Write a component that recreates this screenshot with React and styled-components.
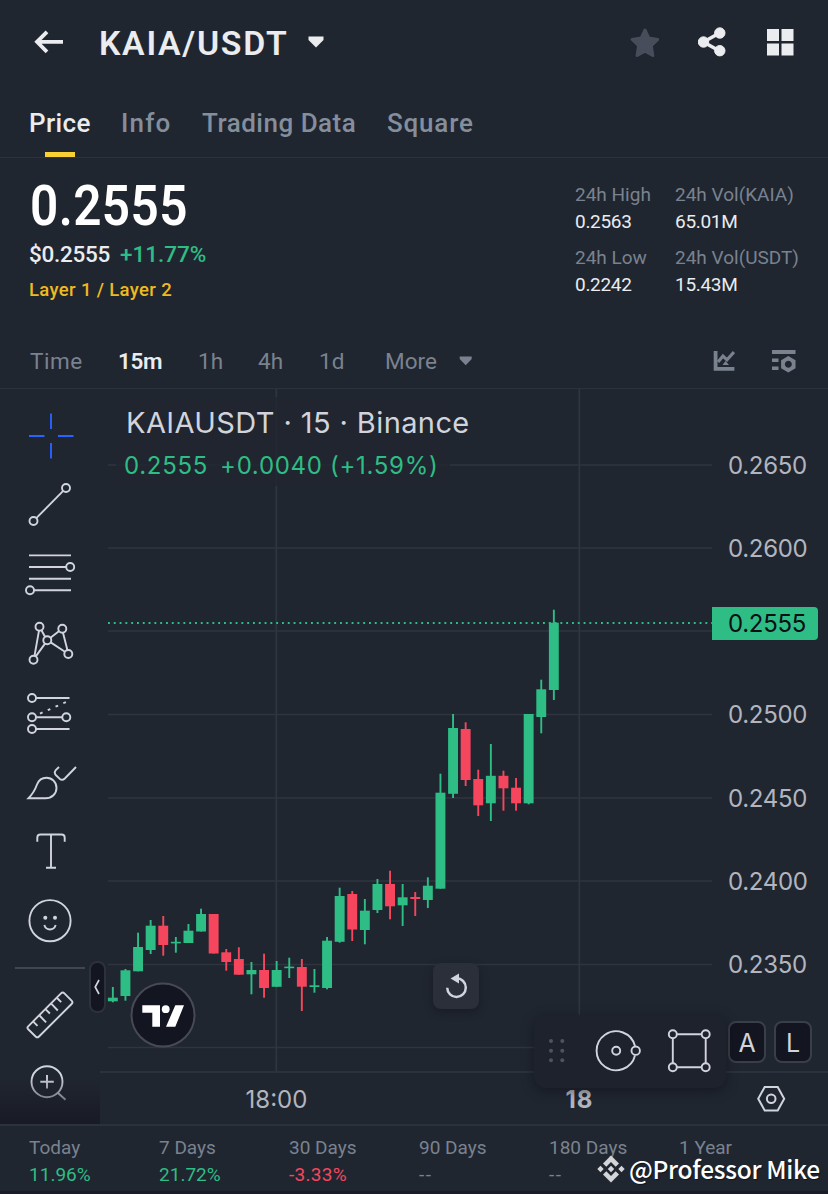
import React from 'react';
import styled, { createGlobalStyle } from 'styled-components';

const GlobalStyle = createGlobalStyle`
* {
  box-sizing: border-box;
}
body {
  margin: 0;
  background: #202630;
}
`;

const Page = styled.div`
position: relative;
display: flex;
flex-direction: column;
width: 828px;
height: 1194px;
overflow: hidden;
background: #202630;
color: #eaecef;
font-family: Roboto, 'Noto Sans', sans-serif;
white-space: nowrap;
border-bottom: 3px solid #1b1c28;
`;

const Header = styled.header`
display: flex;
align-items: center;
height: 86px;
padding: 0 34px 2px 33px;
`;

const Pair = styled.h1`
margin: 4px 19.5px 0 34px;
font-size: 33.8px;
font-weight: 600;
line-height: 40px;
letter-spacing: 1.7px;
`;

const HeaderActions = styled.div`
display: flex;
align-items: center;
gap: 39px;
margin-left: auto;
`;

const Tabs = styled.nav`
display: flex;
height: 72px;
padding-left: 29px;
gap: 30px;
border-bottom: 1px solid #2b343e;
`;

const Tab = styled.div`
position: relative;
line-height: 74px;
font-size: 26px;
font-weight: 500;
width: ${props => props.$w}px;
letter-spacing: ${props => props.$track || 0}px;
color: ${props => props.$active ? '#eaecef' : '#848e9c'};

&::after {
  content: '';
  display: ${props => props.$active ? 'block' : 'none'};
  position: absolute;
  left: 16px;
  bottom: 0;
  width: 30px;
  height: 5px;
  background: #f8d033;
}
`;

const Summary = styled.section`
display: flex;
justify-content: space-between;
height: 176px;
padding: 19px 0 0 29px;
`;

const LastPrice = styled.div`
padding-left: 1px;
font-size: 55px;
font-weight: 600;
line-height: 58px;
color: #fff;
letter-spacing: 0.5px;
transform: scaleX(0.9);
transform-origin: left;
`;

const SubPrice = styled.div`
display: flex;
gap: 10px;
font-size: 22.5px;
font-weight: 500;
line-height: 39px;
letter-spacing: -0.3px;
`;

const Up = styled.span`
color: #2ebd85;
letter-spacing: 0;
`;

const Tag = styled.div`
font-size: 18.5px;
font-weight: 500;
line-height: 33px;
color: #ecbb20;
letter-spacing: 0.35px;
`;

const Stats = styled.div`
display: grid;
grid-template-columns: 100px 153px;
grid-template-rows: 63px 63px;
padding-top: 4px;
`;

const StatLabel = styled.div`
font-size: 19px;
line-height: 27px;
color: #7a828f;
`;

const StatValue = styled.div`
font-size: 19px;
line-height: 27px;
letter-spacing: ${props => props.$track || -0.3}px;
color: ${props => props.color || '#eaecef'};
`;

const Intervals = styled.div`
display: flex;
align-items: center;
height: 55px;
padding: 0 31px 0 30px;
border-bottom: 1.5px solid #2b323d;
`;

const Interval = styled.div`
width: ${props => props.$w}px;
font-size: 22.5px;
line-height: 54px;
font-weight: ${props => props.$active ? 600 : 400};
color: ${props => props.$active ? '#eaecef' : '#7a828f'};
letter-spacing: ${props => props.$track || 0}px;
`;

const IntervalActions = styled.div`
display: flex;
align-items: center;
gap: 37px;
margin-left: auto;
`;

const ChartArea = styled.section`
display: flex;
height: 737px;
border-bottom: 2px solid #2b323d;
font-family: Inter, Roboto, sans-serif;
`;

const Sidebar = styled.aside`
position: relative;
width: 100px;
padding-top: 12px;
`;

const ToolIcon = styled.svg`
display: block;
fill: none;
stroke: ${props => props.color || '#d1d4dc'};
stroke-width: 1.9;
`;

const Divider = styled.div`
height: 2px;
margin: 14px 15px 11px;
background: #42464f;
`;

const Fade = styled.div`
position: absolute;
left: 0;
right: 0;
bottom: 0;
height: 48px;
background: linear-gradient(rgba(24, 26, 37, 0), rgba(24, 26, 37, 0.95));
`;

const Collapse = styled.div`
position: absolute;
left: 89px;
top: 572px;
z-index: 2;
display: flex;
align-items: center;
justify-content: center;
width: 17px;
height: 52px;
border: 2px solid #2c313b;
border-radius: 8px;
background: #131620;
`;

const Chart = styled.div`
position: relative;
display: grid;
grid-template-columns: 612px 116px;
grid-template-rows: 682px 53px;
`;

const Plot = styled.svg`
display: block;
`;

const Legend = styled.div`
position: absolute;
left: 16px;
top: 8px;
width: 334px;
padding: 4px 0 0 8px;
background: rgba(32, 38, 48, 0.8);
`;

const Symbol = styled.div`
padding-left: 2px;
font-size: 29px;
line-height: 43px;
color: #d1d4dc;
letter-spacing: 0.4px;
`;

const Change = styled.div`
display: flex;
gap: 12px;
padding-top: 1px;
font-size: 24px;
line-height: 41px;
color: #2ebd85;
letter-spacing: 0.7px;
`;

const PriceAxis = styled.div`
position: relative;
padding-top: 34.5px;
color: #b2b5be;
`;

const PriceLabel = styled.div`
height: 83.25px;
padding-left: 16px;
font-size: 24px;
line-height: 83.25px;
letter-spacing: -0.3px;
`;

const CurrentPrice = styled.div`
position: absolute;
left: 0;
top: 218px;
width: 106px;
height: 33px;
padding-left: 16px;
border-radius: 0 4px 4px 0;
background: #2ebd85;
color: #0c0e15;
font-size: 24px;
line-height: 33px;
letter-spacing: -0.3px;
`;

const ScaleButtons = styled.div`
position: absolute;
left: 16px;
top: 632px;
display: flex;
gap: 8px;
`;

const ScaleButton = styled.div`
width: 38px;
height: 42px;
border: 2px solid #3a3e48;
border-radius: 8px;
background: #131620;
color: #d1d4dc;
font-size: 25px;
line-height: 40px;
text-align: center;
`;

const TimeAxis = styled.div`
display: grid;
grid-template-columns: 353px 250px;
border-top: 2px solid #2b323d;
line-height: 54px;
font-size: 24px;
color: #b2b5be;
text-align: center;
`;

const TimeLabel = styled.div`
font-weight: ${props => props.$bold ? 700 : 400};
padding-left: ${props => props.$bold ? 3 : 0}px;
letter-spacing: ${props => props.$bold ? 1 : 0}px;
`;

const AxisSettings = styled.div`
display: flex;
align-items: center;
padding: 1px 0 0 44px;
border-top: 2px solid #2b323d;
`;

const Logo = styled.svg`
position: absolute;
left: 30px;
top: 593px;
`;

const ResetButton = styled.div`
position: absolute;
left: 333px;
top: 574px;
width: 46px;
height: 46px;
border-radius: 8px;
background: #2a2f39;
box-shadow: 0 3px 8px rgba(10, 12, 20, 0.4);
`;

const FloatingBar = styled.div`
position: absolute;
left: 434px;
top: 626px;
width: 192px;
height: 73px;
border-radius: 12px;
background: #1e222d;
box-shadow: 0 3px 12px rgba(10, 12, 20, 0.5);
`;

const Performance = styled.footer`
display: grid;
grid-template-columns: repeat(6, 130px);
padding: 8px 0 0 29px;
`;

const Watermark = styled.div`
position: absolute;
left: 597px;
bottom: 4px;
display: flex;
align-items: center;
gap: 4px;
font-family: 'Noto Sans CJK SC', 'Open Sans', sans-serif;
font-size: 24.5px;
font-weight: 500;
line-height: 36px;
color: #fff;
text-shadow: 1px 1px 1px rgba(0, 0, 0, 0.5);
letter-spacing: -0.3px;
`;

const prices = ['0.2650', '0.2600', '', '0.2500', '0.2450', '0.2400', '0.2350'];

const intervals = [
  { label: 'Time', w: 88, track: 0.5 },
  { label: '15m', w: 80, track: -0.4, active: true },
  { label: '1h', w: 60 },
  { label: '4h', w: 61 },
  { label: '1d', w: 66 },
  { label: 'More', w: 74 },
];

const performance = [
  { label: 'Today', value: '11.96%', color: '#2ebd85', track: 0.01 },
  { label: '7 Days', value: '21.72%', color: '#2ebd85', track: 0.01 },
  { label: '30 Days', value: '-3.33%', color: '#f6465d', track: 0.3 },
  { label: '90 Days', value: '--', color: '#7a828f', track: 1.5 },
  { label: '180 Days', value: '--', color: '#7a828f', track: 1.5 },
  { label: '1 Year', value: '--', color: '#7a828f', track: 1.5 },
];

// [up, high, bodyTop, bodyBottom, low] in chart units
const candles = [
  [1, 987, 997.7, 1001.3, 1002.3],
  [1, 969, 970.3, 996, 1000.7],
  [1, 932.7, 947, 971.3, 971.3],
  [1, 920, 925.7, 950, 954],
  [0, 916, 925.7, 945, 955.7],
  [1, 937, 941.8, 943.4, 952.7],
  [1, 924, 930.7, 943, 943],
  [1, 908.7, 914, 931.5, 931.5],
  [0, 914, 914, 953.5, 953.5],
  [0, 949, 952.3, 962, 970.7],
  [0, 947.3, 959, 974.7, 974.7],
  [1, 962, 970, 974.3, 994.3],
  [0, 953.7, 970, 988, 997.7],
  [1, 961, 970, 986.8, 986.8],
  [1, 957.7, 966.6, 968.2, 978],
  [0, 959, 967, 986.7, 1011],
  [1, 969, 985.3, 987, 992.7],
  [1, 937, 940.7, 988, 989.3],
  [1, 887.7, 896, 941.8, 942.7],
  [0, 891, 894, 929.5, 941],
  [1, 899, 910.7, 930, 944.3],
  [1, 879, 884, 910, 913],
  [0, 870.7, 884, 906.3, 919.3],
  [1, 884, 897.3, 905.3, 926],
  [0, 892, 897, 899, 916],
  [1, 877.3, 885.7, 900, 908],
  [1, 773.7, 792.7, 888.7, 888.7],
  [1, 714, 728, 793.8, 798],
  [0, 722.3, 729, 780, 786],
  [0, 769.7, 779, 805.3, 816],
  [1, 744, 775.8, 803.3, 821],
  [0, 770.7, 775.8, 788.3, 810.7],
  [0, 778, 787.7, 803.3, 810.7],
  [1, 714, 714, 803.3, 804.3],
  [1, 679.7, 689.3, 717, 733.3],
  [1, 609.7, 622.7, 690, 700],
];

const gridY = [465, 548, 631, 714.5, 798, 881, 964.5, 1047.5];

const CandlePlot = () => (
  <Plot width="612" height="682" viewBox="100 389 612 682">
    <g stroke="#2f353f" strokeWidth="1.7">
      {gridY.map(y => <line key={y} x1="108" x2="712" y1={y} y2={y} />)}
      <line x1="276.3" x2="276.3" y1="389" y2="1071" />
      <line x1="579.3" x2="579.3" y1="389" y2="1071" />
    </g>
    <line x1="108" x2="712" y1="623" y2="623" stroke="#2ebd85" strokeWidth="1.8" strokeDasharray="1.9 3.9" />
    {candles.map(([up, high, top, bottom, low], i) => {
      const x = 107.9 + 12.6 * i;
      const color = up ? '#2ebd85' : '#f6465d';
      return (
        <g key={i} fill={color}>
          <rect x={x + 4} y={high} width="1.9" height={low - high} />
          <rect x={x} y={top} width="9.9" height={bottom - top} />
        </g>
      );
    })}
  </Plot>
);

const Tool = ({ color, children }) => (
  <ToolIcon width="100" height="69" viewBox="0 0 100 69" color={color}>{children}</ToolIcon>
);

const Tools = () => (
  <Sidebar>
    <Tool color="#2962ff">
      <path d="M29 35h15.5M58 35h15.5M51 12.5V28M51 42v15.5" />
    </Tool>
    <Tool>
      <circle cx="66" cy="18" r="4" />
      <circle cx="33.5" cy="51" r="4" />
      <path d="M36.3 48.2L63.2 20.8" />
    </Tool>
    <Tool>
      <circle cx="70.2" cy="28" r="4" />
      <circle cx="30" cy="51.3" r="4" />
      <path d="M29 16.4h42M29 28h37M29 39.7h42M34 51.3h37" />
    </Tool>
    <Tool>
      <circle cx="39.5" cy="18.7" r="4" />
      <circle cx="62.3" cy="20.7" r="4" />
      <circle cx="47.3" cy="32.3" r="4" />
      <circle cx="33.5" cy="51.7" r="4" />
      <circle cx="68.3" cy="46" r="4" />
      <path d="M39 22.7L34.5 47.8M41.5 22.2l3.5 6.6M50.5 29.8l8.7-6.7M63 24.7l4.4 17.4M50.7 34.4l14.2 9.4M45 35.6l-9.2 12.8" />
    </Tool>
    <Tool>
      <circle cx="32" cy="21" r="4" />
      <circle cx="32" cy="40.3" r="4" />
      <circle cx="66.3" cy="40.3" r="4" />
      <circle cx="32" cy="52" r="4" />
      <path d="M36 21h33.5M36 40.3h26.3M36 52h33.5" />
      <path d="M40 36.6L67 24.6" strokeDasharray="2.8 5.7" />
    </Tool>
    <Tool>
      <path d="M28.5 52.2c4-4 7-9.5 8.5-13.7 1.7-4.5 5-6.8 9.5-6.8 5.5 0 10 4.5 10 10.2 0 5.8-4.5 10.3-11 10.3z" />
      <path d="M59 21l-3 2.8q-2.5 2.7 0 5.5l3.8 3.6q2.5 2 5-.4L76 21" />
    </Tool>
    <Tool>
      <path d="M37.3 26.7v-4q0-3.2 3.2-3.2h21q3.2 0 3.2 3.2v4M51 19.5v33M46 52.7h10" />
    </Tool>
    <Tool>
      <circle cx="50" cy="36.7" r="20.6" />
      <circle cx="45.3" cy="33.7" r="2" fill="#d1d4dc" stroke="none" />
      <circle cx="55" cy="33.7" r="2" fill="#d1d4dc" stroke="none" />
      <path d="M44.3 41q1.5 4.5 5.7 4.5t5.7-4.5" />
    </Tool>
    <Divider />
    <Tool>
      <path strokeLinejoin="round" d="M28.2 46.3L61 13.3q1.7-1.7 3.4 0l7.2 7.3q1.7 1.7 0 3.4L39 56.5q-1.7 1.7-3.4 0l-7.4-7.2q-1.5-1.5 0-3z" />
      <path d="M33.3 41.7l4.2 4.2M39.5 35.5l6.6 6.8M45.7 29.3l4.2 4.2M51.2 23.7l6.6 6.8M57 18l4.2 4.2" />
    </Tool>
    <Tool>
      <circle cx="47" cy="32.7" r="15.5" />
      <path d="M40.3 32.7h13.5M47 26v13.4M58 44l7.5 6.8" />
    </Tool>
    <Fade />
    <Collapse>
      <svg width="8" height="18" viewBox="0 0 8 18" fill="none" stroke="#d1d4dc" strokeWidth="1.7">
        <path d="M5 2L1.2 9 5 16" />
      </svg>
    </Collapse>
  </Sidebar>
);

const App = () => (
  <>
    <GlobalStyle />
    <Page>
      <Header>
        <svg width="32" height="26" viewBox="33 29 32 26" fill="none" stroke="#eaecef" strokeWidth="3.8">
          <path d="M36.5 41.8H63M47 31.8l-10 10 10 10" />
        </svg>
        <Pair>KAIA/USDT</Pair>
        <svg width="16" height="12" viewBox="0 0 16 12" fill="#eaecef">
          <path d="M.5 .5h15V4L8 11.5 .5 4z" />
        </svg>
        <HeaderActions>
          <svg width="30" height="30" viewBox="628.5 26.500 30 30" fill="#474d5a" stroke="#474d5a" strokeWidth="3" strokeLinejoin="round">
            <path d="M644.5 29.5l3.9 8.1 8.8 1.3-6.4 6.2 1.5 9.9-7.8-4.2-7.9 4.2 1.5-9.9-6.4-6.2 8.9-1.3z" />
          </svg>
          <svg width="30" height="30" viewBox="698 27.5 30 30" fill="#eaecef" stroke="#eaecef">
            <path d="M719.5 33.5l-16 9 16 9" fill="none" strokeWidth="3.5" />
            <circle cx="719.8" cy="33.5" r="5.2" />
            <circle cx="703.5" cy="42.5" r="5.2" />
            <circle cx="719.8" cy="51.2" r="5.2" />
          </svg>
          <svg width="27" height="27" viewBox="0 0 27 27" fill="#eaecef">
            <path d="M0 0h12v12H0zM14.5 0h12v12h-12zM0 14.5h12v12H0zM14.5 14.5h12v12h-12z" />
          </svg>
        </HeaderActions>
      </Header>

      <Tabs>
        <Tab $w={62} $track={0.4} $active>Price</Tab>
        <Tab $w={51} $track={1.2}>Info</Tab>
        <Tab $w={155} $track={0.5}>Trading Data</Tab>
        <Tab $w={88} $track={0.8}>Square</Tab>
      </Tabs>

      <Summary>
        <div>
          <LastPrice>0.2555</LastPrice>
          <SubPrice><span>$0.2555</span><Up>+11.77%</Up></SubPrice>
          <Tag>Layer 1 / Layer 2</Tag>
        </div>
        <Stats>
          <div><StatLabel>24h High</StatLabel><StatValue>0.2563</StatValue></div>
          <div><StatLabel>24h Vol(KAIA)</StatLabel><StatValue>65.01M</StatValue></div>
          <div><StatLabel>24h Low</StatLabel><StatValue>0.2242</StatValue></div>
          <div><StatLabel>24h Vol(USDT)</StatLabel><StatValue>15.43M</StatValue></div>
        </Stats>
      </Summary>

      <Intervals>
        {intervals.map(({ label, w, track, active }) => (
          <Interval key={label} $w={w} $track={track} $active={active}>{label}</Interval>
        ))}
        <svg width="14" height="10" viewBox="0 0 14 10" fill="#7a828f">
          <path d="M.7 .5h12V3l-6 6.2-6-6.2z" />
        </svg>
        <IntervalActions>
          <svg width="22" height="22" viewBox="713 349 22 22" fill="none" stroke="#7a828f" strokeWidth="3.2">
            <path d="M715.6 350v17.8h18.8" strokeWidth="3.8" />
            <path d="M718 361l5-6 4 3.8 7-7.8" />
            <path d="M722.5 364l3-4 3.5 4z" fill="#7a828f" stroke="none" />
          </svg>
          <svg width="25" height="24" viewBox="772 349 25 24" fill="#7a828f">
            <path d="M772 350h23.5v4H772zM772 358.5h6.5v3.5H772zM772 366.5h6.5v3.5H772z" />
            <path fillRule="evenodd" d="M788.3 356l7.2 4.2v8l-7.2 4.3-7.2-4.3v-8zM788.3 360.7a3.5 3.5 0 1 0 .1 0z" />
          </svg>
        </IntervalActions>
      </Intervals>

      <ChartArea>
        <Tools />
        <Chart>
          <CandlePlot />
          <PriceAxis>
            {prices.map((price, i) => <PriceLabel key={i}>{price}</PriceLabel>)}
            <CurrentPrice>0.2555</CurrentPrice>
            <ScaleButtons>
              <ScaleButton>A</ScaleButton>
              <ScaleButton>L</ScaleButton>
            </ScaleButtons>
          </PriceAxis>
          <TimeAxis>
            <TimeLabel>18:00</TimeLabel>
            <TimeLabel $bold>18</TimeLabel>
          </TimeAxis>
          <AxisSettings>
            <svg width="30" height="28" viewBox="756 1085 30 28" fill="none" stroke="#d1d4dc" strokeWidth="2">
              <path d="M764.7 1087h13l6.5 11.7-6.5 11.7h-13l-6.5-11.7z" />
              <circle cx="771.2" cy="1098.7" r="4.3" />
            </svg>
          </AxisSettings>

          <Legend>
            <Symbol>KAIAUSDT · 15 · Binance</Symbol>
            <Change><span>0.2555</span><span>+0.0040 (+1.59%)</span></Change>
          </Legend>
          <Logo width="66" height="66" viewBox="130 982 66 66">
            <circle cx="163" cy="1015" r="31.5" fill="#131620" stroke="#474a54" strokeWidth="2" />
            <path d="M142.3 1005.3H160v21.4h-7.7v-14h-10zM175.3 1005.3h8.7l-8.7 21.4H166z" fill="#fff" />
            <circle cx="165.7" cy="1009.2" r="3.9" fill="#fff" />
          </Logo>
          <ResetButton>
            <svg width="46" height="46" viewBox="433 963 46 46">
              <path d="M447.2 987.8a9.3 9.3 0 1 0 9.3-9.5" fill="none" stroke="#d1d4dc" strokeWidth="2.5" />
              <path d="M450.5 978.6l8.5-5v10z" fill="#d1d4dc" />
            </svg>
          </ResetButton>
          <FloatingBar>
            <svg width="192" height="73" viewBox="534 1015 192 73" fill="none" stroke="#d1d4dc" strokeWidth="1.9">
              <g fill="#50535e" stroke="none">
                {[1041, 1050.7, 1060.3].map(y => (
                  <React.Fragment key={y}>
                    <circle cx="551" cy={y} r="2" />
                    <circle cx="562.3" cy={y} r="2" />
                  </React.Fragment>
                ))}
              </g>
              <path d="M635 1046a19.5 19.5 0 1 0 0 9.5" />
              <circle cx="616.2" cy="1050.7" r="4" />
              <circle cx="635.7" cy="1050.7" r="4.2" />
              <circle cx="672.8" cy="1034.3" r="4" />
              <circle cx="705.7" cy="1034.3" r="4" />
              <circle cx="672.8" cy="1067.3" r="4" />
              <circle cx="705.7" cy="1067.3" r="4" />
              <path d="M677 1034.3h24.7M677 1067.3h24.7M672.8 1038.3v25M705.7 1038.3v25" />
            </svg>
          </FloatingBar>
        </Chart>
      </ChartArea>

      <Performance>
        {performance.map(({ label, value, color, track }) => (
          <div key={label}>
            <StatLabel>{label}</StatLabel>
            <StatValue color={color} $track={track}>{value}</StatValue>
          </div>
        ))}
      </Performance>

      <Watermark>
        <svg width="28" height="28" viewBox="0 0 28 28" fill="#d4d5d8">
          <path d="M14 .5l8 8-3.3 3.3L14 7.1l-4.7 4.7L6 8.5zM14 27.5l8-8-3.3-3.3-4.7 4.7-4.7-4.7L6 19.5zM14 10.8l3.2 3.2-3.2 3.2-3.2-3.2zM3.5 10.8L6.7 14l-3.2 3.2L.3 14zM24.5 10.8l3.2 3.2-3.2 3.2-3.2-3.2z" />
        </svg>
        <span>@Professor Mike</span>
      </Watermark>
    </Page>
  </>
);

export default App;
